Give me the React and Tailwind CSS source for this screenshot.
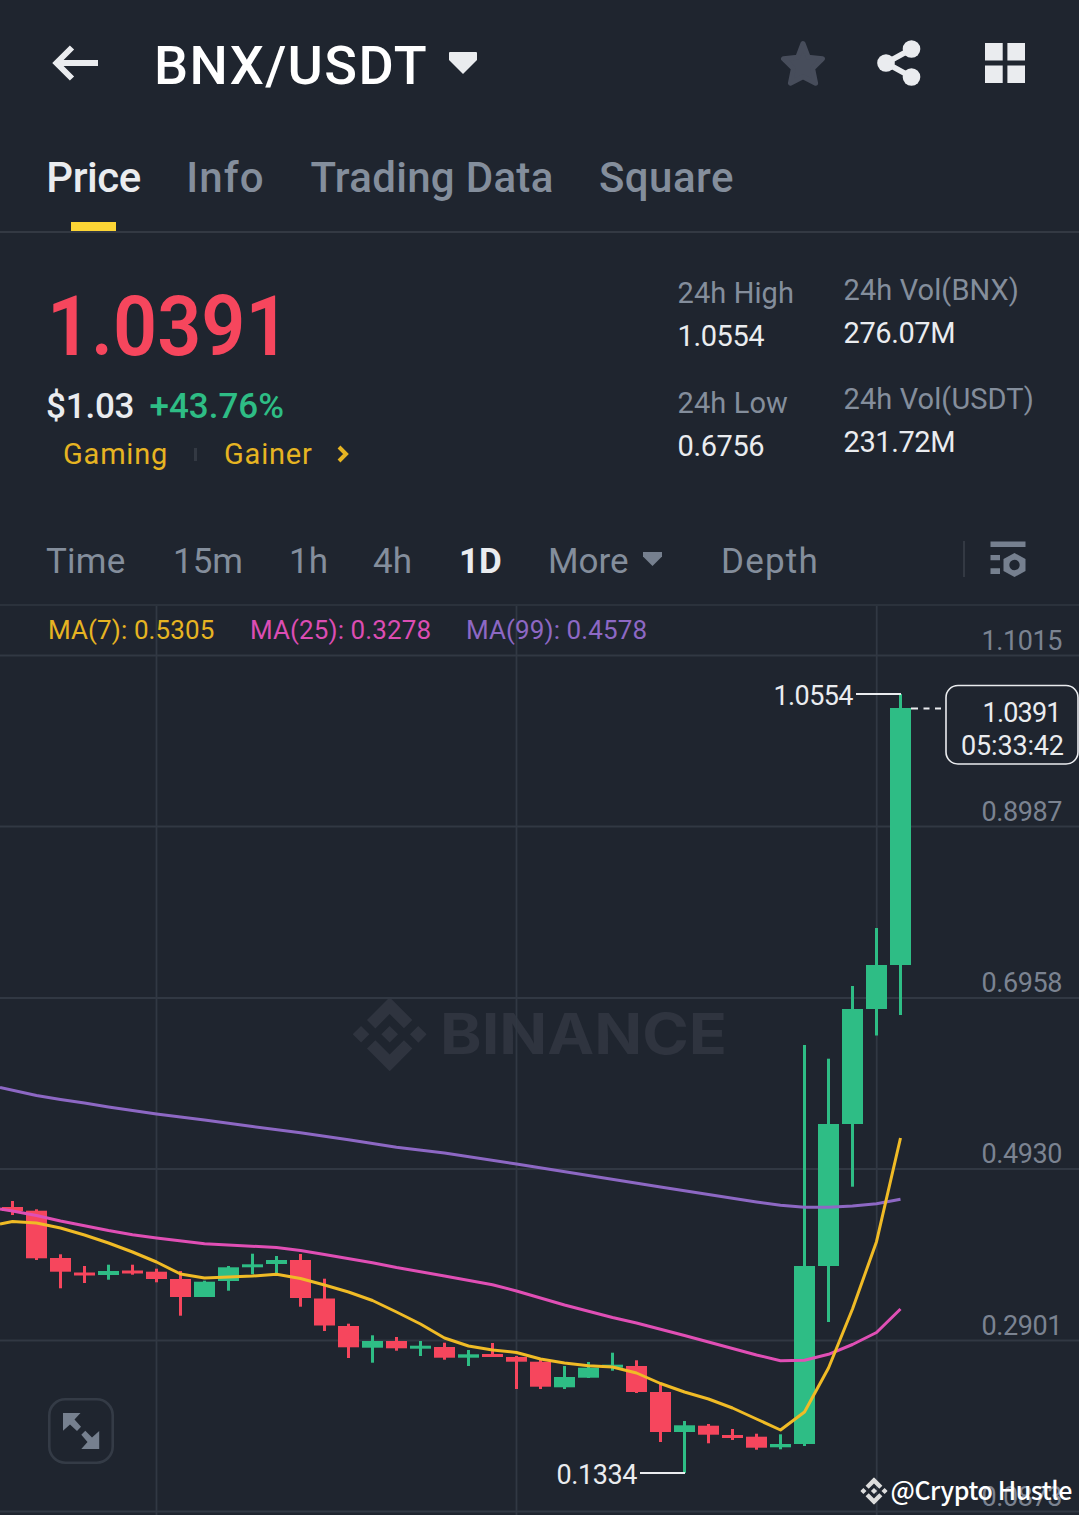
import React from 'react';
import { SiBinance } from 'react-icons/si';

const UP = '#2ebd85';
const DOWN = '#f6465d';

const TABS = [
    { label: 'Price', className: 'w-[93px] tracking-[-0.5px] text-[#eaecef]', active: true },
    { label: 'Info', className: 'w-[80px] tracking-[1.2px] text-[#848e9c]' },
    { label: 'Trading Data', className: 'w-[242px] tracking-[0.3px] text-[#848e9c]' },
    { label: 'Square', className: 'w-[136px] tracking-[0.5px] text-[#848e9c]' },
];

// [body top, body bottom, wick top, wick bottom, direction], one every 24px
const CANDLES = [
    [1207, 1211, 1201, 1215, 'down'],
    [1210.7, 1258.3, 1209.3, 1260, 'down'],
    [1258, 1271.7, 1254.3, 1288.3, 'down'],
    [1272.5, 1275.5, 1266, 1283, 'down'],
    [1271, 1275, 1264.7, 1279.7, 'up'],
    [1270.5, 1273.5, 1264.7, 1274.7, 'down'],
    [1271.7, 1279, 1268.7, 1282.3, 'down'],
    [1279, 1297, 1271, 1315.7, 'down'],
    [1281.7, 1297, 1280.7, 1297, 'up'],
    [1267.3, 1281, 1266, 1290.7, 'up'],
    [1264.3, 1267.3, 1253.7, 1274.3, 'up'],
    [1260, 1264, 1256, 1274.3, 'up'],
    [1260, 1298, 1254, 1306.7, 'down'],
    [1298.5, 1325.5, 1278.7, 1331, 'down'],
    [1326, 1347.3, 1323.7, 1358, 'down'],
    [1341, 1347.7, 1335.3, 1362.7, 'up'],
    [1341, 1348.3, 1337, 1350.7, 'down'],
    [1345.7, 1348.7, 1341, 1356, 'up'],
    [1347, 1357.7, 1342.7, 1359.7, 'down'],
    [1354.3, 1357.7, 1350, 1366, 'up'],
    [1354, 1357, 1343, 1357, 'down'],
    [1357, 1361.7, 1356, 1389, 'down'],
    [1361.7, 1386.7, 1360, 1389, 'down'],
    [1377, 1387.3, 1366, 1389, 'up'],
    [1367.7, 1377.7, 1362, 1378, 'up'],
    [1364.7, 1367.7, 1352.7, 1370.7, 'up'],
    [1366, 1392, 1360.3, 1393, 'down'],
    [1392, 1432, 1383, 1442, 'down'],
    [1425.3, 1432, 1421, 1473, 'up'],
    [1425.7, 1434.7, 1424, 1443.3, 'down'],
    [1435, 1438, 1429, 1440, 'down'],
    [1436.7, 1447.7, 1433.7, 1449.7, 'down'],
    [1444, 1447.3, 1434.3, 1449.3, 'up'],
    [1266, 1444, 1045, 1446, 'up'],
    [1124, 1266, 1058.7, 1322, 'up'],
    [1009, 1124, 986, 1186.7, 'up'],
    [965, 1009, 928, 1035.5, 'up'],
    [708, 965, 694, 1015, 'up'],
];

const MA7 =
    '0,1224 12.5,1221.5 36.5,1223 60.5,1228 84.5,1235 108.5,1243 132.5,1252 156.5,1262 180.5,1274 204.5,1278 228.5,1277 252.5,1276 276.5,1274.3 300.5,1278.5 324.5,1285 348.5,1292 372.5,1300.5 396.5,1312 420.5,1324 444.5,1338 468.5,1346 492.5,1350 516.5,1352.5 540.5,1359 564.5,1363 588.5,1365.7 612.5,1367 636.5,1373 660.5,1383.5 684.5,1392 708.5,1399 732.5,1408 756.5,1419 780.5,1430 804.5,1412 828.5,1368 852.5,1309 876.5,1241.7 900.5,1138';
const MA25 =
    '0,1209 12.5,1211 36.5,1215.5 60.5,1221 108.5,1230.5 132.5,1234.7 156.5,1238 204.5,1243.7 276.5,1247.5 300.5,1250.5 324.5,1254.5 372.5,1262.7 396.5,1267.5 444.5,1276 492.5,1284.7 516.5,1291 564.5,1305 612.5,1317.5 636.5,1323 684.5,1335.5 732.5,1348.5 756.5,1355 780.5,1360.7 804.5,1360.3 828.5,1354.3 852.5,1344.5 876.5,1332.5 900.5,1309';
const MA99 =
    '0,1087.5 36.5,1095.5 60.5,1099.5 84.5,1103 108.5,1107 132.5,1110.5 156.5,1114 204.5,1120 252.5,1126.5 300.5,1132.7 348.5,1139.7 396.5,1147.3 444.5,1153 516.5,1164 588.5,1175.5 660.5,1187 708.5,1194.5 756.5,1202 780.5,1205.3 804.5,1207.3 828.5,1207.3 852.5,1206 876.5,1203.7 900.5,1199.3';

const AXIS = [
    { line: 655.5, y: 650, label: '1.1015' },
    { line: 826.5, y: 821, label: '0.8987' },
    { line: 998, y: 992, label: '0.6958' },
    { line: 1169, y: 1163, label: '0.4930' },
    { line: 1340.5, y: 1335, label: '0.2901' },
    { line: 1511.5, y: 1506, label: '0.0873' },
];

const Header = () => (
    <header className="flex h-[126px] items-center pl-[52px] pr-[54px]">
        <svg width="46" height="36" viewBox="0 0 46 36" fill="none" stroke="#eaecef" strokeWidth="6">
            <path d="M4 18H46M20 2.5L4.5 18L20 33.5" />
        </svg>
        <h1 className="ml-[56px] w-[273px] whitespace-nowrap pt-[5px] text-[54px] font-medium leading-none tracking-[1.4px] text-white">
            BNX/USDT
        </h1>
        <svg className="ml-[22px]" width="28" height="22" viewBox="0 0 28 22" fill="#eaecef">
            <path d="M0.5 0H27.5L28 0.5V8L14 22L0 8V0.5Z" />
        </svg>
        <div className="ml-auto flex items-center">
            <svg width="46" height="46" viewBox="0 0 46 46" fill="#474d5b" stroke="#474d5b" strokeWidth="5" strokeLinejoin="round">
                <path d="M23 3.5L28.2 17.2L42.5 18.8L32.6 28.5L35.6 43.2L23 36.8L10.4 43.2L13.4 28.5L3.5 18.8L17.8 17.2Z" />
            </svg>
            <svg className="ml-[51px]" width="44" height="46" viewBox="0 0 44 46" fill="#eaecef">
                <path d="M34.5 9L9 23L34.5 37" fill="none" stroke="#eaecef" strokeWidth="5.5" />
                <circle cx="34.5" cy="9" r="8.8" />
                <circle cx="9" cy="23" r="8.8" />
                <circle cx="34.5" cy="37" r="8.8" />
            </svg>
            <svg className="ml-[64px]" width="40" height="40" viewBox="0 0 40 40" fill="#eaecef">
                <path d="M0 0H17.7V17.5H0ZM22.4 0H40V17.5H22.4ZM0 22.5H17.7V40H0ZM22.4 22.5H40V40H22.4Z" />
            </svg>
        </div>
    </header>
);

const Tabs = () => (
    <nav className="flex gap-[45.5px] border-b-2 border-[#333943] pl-[47px] pt-[28px] text-[42px] font-medium leading-[48px]">
        {TABS.map((tab) => (
            <div key={tab.label} className={`flex flex-col items-center ${tab.className}`}>
                <span className="whitespace-nowrap">{tab.label}</span>
                <span className={`mt-[20px] h-[9px] w-[45px] ${tab.active ? 'bg-[#fcd535]' : ''}`} />
            </div>
        ))}
    </nav>
);

const Stat = ({ label, value }) => (
    <div className="whitespace-nowrap leading-9">
        <div className="text-[29px] tracking-[0.1px] text-[#848e9c]">{label}</div>
        <div className="mt-[7px] text-[29px] tracking-[-0.4px] text-[#eaecef]">{value}</div>
    </div>
);

const Summary = () => (
    <section className="flex h-[283px]">
        <div className="w-[677.5px] pl-[46px] pt-[52px]">
            <div className="w-[260px] origin-left scale-x-[0.92] pl-[1px] text-[84px] font-semibold leading-[84px] text-[#f6465d]">1.0391</div>
            <div className="mt-[18px] flex text-[35px] font-medium leading-10">
                <span className="w-[103.5px] tracking-[-0.2px] text-[#eaecef]">$1.03</span>
                <span className="text-[#2ebd85]">+43.76%</span>
            </div>
            <div className="mt-[9px] flex items-center pl-[17px] text-[29px] leading-9 text-[#e6b422]">
                <span className="w-[105px] tracking-[0.8px]">Gaming</span>
                <span className="ml-[26px] h-[13px] w-[3px] bg-[#333943]" />
                <span className="ml-[27px] w-[90px] tracking-[0.8px]">Gainer</span>
                <svg className="ml-[23px]" width="12" height="18" viewBox="0 0 12 18" fill="none" stroke="#e6b422" strokeWidth="4">
                    <path d="M2 2L9 9L2 16" />
                </svg>
            </div>
        </div>
        <div className="flex w-[166px] flex-col gap-[31px] pt-[42px]">
            <Stat label="24h High" value="1.0554" />
            <Stat label="24h Low" value="0.6756" />
        </div>
        <div className="flex flex-col gap-[30px] pt-[39px]">
            <Stat label="24h Vol(BNX)" value="276.07M" />
            <Stat label="24h Vol(USDT)" value="231.72M" />
        </div>
    </section>
);

const Intervals = () => (
    <div className="flex h-[90px] items-center border-b-2 border-[#2b323c] pb-[3px] pl-[46px] pr-[53px] text-[35px] text-[#848e9c]">
        <span className="w-[127px] pt-[8px] tracking-[0.2px]">Time</span>
        <span className="w-[116px] pt-[8px]">15m</span>
        <span className="w-[84px] pt-[8px]">1h</span>
        <span className="w-[86px] pt-[8px]">4h</span>
        <span className="w-[89px] pt-[8px] font-bold text-[#eaecef]">1D</span>
        <span className="w-[95px] pt-[8px]">More</span>
        <svg width="19" height="14" viewBox="0 0 19 14" fill="#76808f">
            <path d="M0 0H19V4.5L9.5 14L0 4.5Z" />
        </svg>
        <span className="ml-[59px] pt-[8px] tracking-[1.2px]">Depth</span>
        <span className="ml-auto h-[36px] w-[2px] bg-[#333943]" />
        <svg className="ml-[25px]" width="36" height="36" viewBox="0 0 36 36" fill="#76808f">
            <path d="M0.5 0.5H35.5V6H0.5ZM0.5 14H10V19.3H0.5ZM0.5 27.3H10V33H0.5Z" />
            <path fillRule="evenodd" d="M24.5 12L35.5 18V30L24.5 36L13.5 30V18ZM24.5 18.8A5.2 5.2 0 1 0 24.5 29.2A5.2 5.2 0 1 0 24.5 18.8Z" />
        </svg>
    </div>
);

const Chart = () => (
    <div className="relative h-[909px]">
        <svg className="block" width="1079" height="909" viewBox="0 606 1079 909" fontFamily="Roboto, sans-serif" fontSize="27">
            <SiBinance x="352.7" y="997.3" size={74} color="#2f343f" />
            <text x="440" y="1054.3" fill="#2f343f" fontFamily="Inter, sans-serif" fontWeight="700" fontSize="56" textLength="287" lengthAdjust="spacingAndGlyphs">BINANCE</text>
            <g stroke="#313843" strokeWidth="1.8">
                {AXIS.map((a) => (
                    <line key={a.label} x1="0" x2="1079" y1={a.line} y2={a.line} />
                ))}
                {[156.5, 516.5, 876.7].map((x) => (
                    <line key={x} x1={x} x2={x} y1="606" y2="1515" />
                ))}
            </g>
            {CANDLES.map(([top, bottom, high, low, dir], i) => (
                <g key={i} fill={dir === 'up' ? UP : DOWN}>
                    <rect x={2 + i * 24} y={top} width="21" height={bottom - top} />
                    <rect x={11 + i * 24} y={high} width="3" height={low - high} />
                </g>
            ))}
            <g fill="none" strokeWidth="3" strokeLinejoin="round">
                <polyline points={MA99} stroke="#8d68c4" />
                <polyline points={MA25} stroke="#e04fb5" />
                <polyline points={MA7} stroke="#f0bb26" />
            </g>
            <g fill="#7b8391">
                {AXIS.map((a) => (
                    <text key={a.label} x="981.5" y={a.y} textLength="81">{a.label}</text>
                ))}
            </g>
            <g stroke="#eaecef" strokeWidth="1.8">
                <path d="M856 694H901M640 1473H685" />
                <path d="M911 708.5H918M923.5 708.5H929.5M935 708.5H941" />
            </g>
            <rect x="946" y="685.5" width="132" height="78.5" rx="12" fill="#1f252f" stroke="#eaecef" strokeWidth="1.6" />
            <g fill="#eaecef">
                <text x="773.5" y="705.3" textLength="80">1.0554</text>
                <text x="556.5" y="1484" textLength="81">0.1334</text>
                <text x="982.5" y="722" textLength="79">1.0391</text>
                <text x="961" y="755" textLength="103">05:33:42</text>
            </g>
            <g fill="#76808f">
                <rect x="49.3" y="1399.3" width="63.4" height="63.4" rx="16" fill="none" stroke="#343b46" strokeWidth="2.6" />
                <path d="M63 1413H80.5L74.5 1419.5L81 1426.8L77 1431L70 1424.5L63 1430.8Z" />
                <path d="M99.2 1449H81.3L87.5 1442L81.3 1434.8L85.3 1430.8L92 1437.5L99.2 1431Z" />
            </g>
            <SiBinance x="860.3" y="1477.3" size={27.4} color="#dcdcdc" />
            <text x="890.5" y="1500" fill="#ffffff" fontFamily="'Noto Sans CJK SC', sans-serif" fontWeight="500" fontSize="25" textLength="182">@Crypto Hustle</text>
        </svg>
        <div className="absolute left-[48px] top-[8px] flex whitespace-nowrap text-[26px] leading-8 tracking-[0.1px]">
            <span className="w-[202px] text-[#e6b422]">MA(7): 0.5305</span>
            <span className="w-[216px] text-[#dc4db3]">MA(25): 0.3278</span>
            <span className="text-[#8d68c4]">MA(99): 0.4578</span>
        </div>
    </div>
);

export default function App() {
    return (
        <div className="h-[1515px] w-[1079px] overflow-hidden bg-[#1f252f] font-[Roboto,sans-serif]">
            <Header />
            <Tabs />
            <Summary />
            <Intervals />
            <Chart />
        </div>
    );
}
